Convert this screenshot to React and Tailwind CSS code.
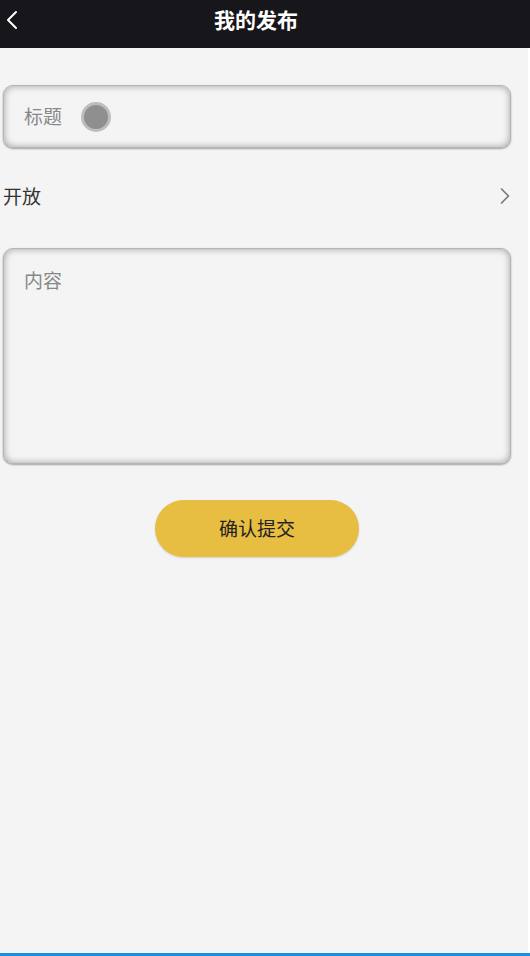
import { ChevronLeft, ChevronRight } from "lucide-react";

const boxCls =
  "rounded-[10px] bg-[#f4f4f4] border border-[#b5b5b5] shadow-[inset_0_0_7px_rgba(0,0,0,0.35),0_1px_2px_rgba(0,0,0,0.35)]";

function App() {
  return (
    <div
      className="relative w-[530px] h-[956px] bg-[#f4f4f4] overflow-hidden"
      style={{ fontFamily: '"Noto Sans CJK SC", "Noto Sans", sans-serif' }}
    >
      {/* Header */}
      <div className="relative h-[48px] bg-[#17161b] flex items-center justify-center pr-[18px]">
        <ChevronLeft className="absolute left-[-4px] top-[4px] w-[32px] h-[32px] text-white" strokeWidth={1.5} />
        <h1 className="text-white text-[21px] font-bold leading-none -mt-[10px]">我的发布</h1>
      </div>

      <div className="pr-[19px] pl-[3px]">
        {/* Title input */}
        <div className={`mt-[37px] h-[63px] flex items-center pl-[20px] gap-[19px] ${boxCls}`}>
          <span className="text-[19px] text-[#888]">标题</span>
          <span className="w-[30px] h-[30px] rounded-full bg-[#8f8f8f] border-[3px] border-[#bdbdbd]" />
        </div>

        {/* Open row */}
        <div className="mt-[28px] flex items-center justify-between h-[40px]">
          <span className="text-[19px] text-[#333]">开放</span>
          <ChevronRight className="w-[28px] h-[28px] text-[#777] -mr-[8px]" strokeWidth={1.4} />
        </div>

        {/* Content textarea */}
        <div className={`mt-[32px] h-[216px] pl-[20px] pt-[17px] ${boxCls}`}>
          <span className="text-[19px] text-[#888]">内容</span>
        </div>

        {/* Submit */}
        <div className="mt-[36px] flex justify-center">
          <button className="w-[204px] h-[57px] rounded-full bg-[#e8be42] text-[19px] text-[#222] shadow-[0_1px_2px_rgba(0,0,0,0.15)]">
            确认提交
          </button>
        </div>
      </div>

      {/* right white strip */}
      <div className="absolute right-0 top-[48px] bottom-0 w-[2px] bg-white" />
      {/* bottom blue line */}
      <div className="absolute left-0 right-0 bottom-0 h-[3px] bg-[#1a8fe8]" />
    </div>
  );
}

export default App;
